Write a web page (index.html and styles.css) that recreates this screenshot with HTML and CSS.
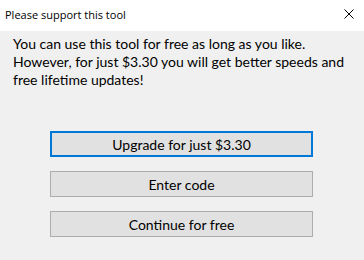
FILE: index.html
```html
<!DOCTYPE html>
<html>
<head>
<meta charset="utf-8">
<link rel="stylesheet" href="styles.css">
</head>
<body>
<div class="window">
  <div class="titlebar">
    <span class="title">Please support this tool</span>
    <svg class="close" width="10" height="10" viewBox="0 0 10 10"><path d="M0.5 0.5 L9.5 9.5 M9.5 0.5 L0.5 9.5" stroke="#000" stroke-width="1"/></svg>
  </div>
  <div class="content">
    <p class="message">You can use this tool for free as long as you like.<br>However, for just $3.30 you will get better speeds and<br>free lifetime updates!</p>
    <div class="buttons">
      <button class="btn btn-default">Upgrade for just $3.30</button>
      <button class="btn">Enter code</button>
      <button class="btn">Continue for free</button>
    </div>
  </div>
</div>
</body>
</html>
```
FILE: styles.css
```css
html, body {
  margin: 0;
  padding: 0;
  width: 364px;
  height: 260px;
  overflow: hidden;
  background: #f0f0f0;
}
.window {
  display: flex;
  flex-direction: column;
  width: 364px;
  height: 260px;
  font-family: "Lato", "Open Sans", sans-serif;
  color: #000;
}
.titlebar {
  height: 31px;
  background: #fff;
  display: flex;
  align-items: center;
  justify-content: space-between;
  padding: 0 10px 0 5px;
  box-sizing: border-box;
}
.title {
  font-family: "Open Sans", "Noto Sans", sans-serif;
  font-size: 11px;
  margin-top: -2px;
}
.close {
  display: block;
  margin-top: -4px;
}
.content {
  padding: 4px 0 0 13px;
}
.message {
  margin: 0;
  font-size: 14px;
  line-height: 18px;
}
.buttons {
  display: flex;
  flex-direction: column;
  gap: 14px;
  margin: 42px 0 0 37px;
}
.btn {
  width: 263px;
  height: 26px;
  box-sizing: border-box;
  background: #e1e1e1;
  border: 1px solid #adadad;
  font-family: "Lato", "Open Sans", sans-serif;
  font-size: 14px;
  color: #000;
  padding: 0;
  margin: 0;
}
.btn-default {
  border: 2px solid #0078d7;
}
```
